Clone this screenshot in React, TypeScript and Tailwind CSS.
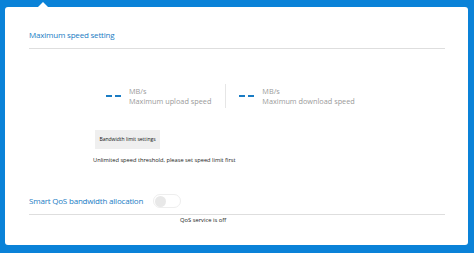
import React from "react";

export default function App() {
  return (
    <div className="w-[474px] h-[253px] bg-[#0a82d8] pt-[7px] pl-[5px] overflow-hidden" style={{ fontFamily: '"Open Sans", "Noto Sans", sans-serif' }}>
      <div className="relative w-[463px] h-[238px] bg-white rounded-[3px] flex flex-col">
        <div className="absolute -top-[5px] left-[33px] w-0 h-0 border-l-[5px] border-r-[5px] border-b-[5px] border-l-transparent border-r-transparent border-b-white" />
        <div className="ml-[24px] mr-[23px] mt-[22px] pb-[7px] border-b border-[#dedede] text-[8px] tracking-[-0.2px] text-[#1a7cc4] leading-[12px]">
          Maximum speed setting
        </div>
        <div className="flex items-center mt-[35px] ml-[101px]">
          <div className="flex items-center">
            <div className="flex gap-[3px] mr-[8px]">
              <div className="w-[6px] h-[2px] bg-[#1a7cc4]" />
              <div className="w-[6px] h-[2px] bg-[#1a7cc4]" />
            </div>
            <div className="text-[7.3px] leading-[10px] text-[#9a9a9a]">
              <div>MB/s</div>
              <div>Maximum upload speed</div>
            </div>
          </div>
          <div className="w-px h-[24px] bg-[#e6e6e6] ml-[14px] mr-[13px]" />
          <div className="flex items-center">
            <div className="flex gap-[3px] mr-[8px]">
              <div className="w-[6px] h-[2px] bg-[#1a7cc4]" />
              <div className="w-[6px] h-[2px] bg-[#1a7cc4]" />
            </div>
            <div className="text-[7.3px] leading-[10px] text-[#9a9a9a]">
              <div>MB/s</div>
              <div>Maximum download speed</div>
            </div>
          </div>
        </div>
        <div className="ml-[90px] mt-[22px] w-[65px] h-[19px] bg-[#efefef] flex items-center justify-center text-[5px] text-[#111] font-medium whitespace-nowrap">
          Bandwidth limit settings
        </div>
        <div className="ml-[88px] mt-[7px] text-[5.7px] text-[#222] leading-[8px] whitespace-nowrap">
          Unlimited speed threshold, please set speed limit first
        </div>
        <div className="ml-[24px] mr-[23px] mt-[29px] pb-[5px] border-b border-[#dedede]">
          <div className="h-[16px] flex items-center">
            <span className="text-[8px] tracking-[-0.2px] text-[#1a7cc4] leading-[12px] w-[124px] whitespace-nowrap">Smart QoS bandwidth allocation</span>
            <div className="w-[28px] h-[14px] rounded-full border border-[#eeeeee] bg-white flex items-center px-[1px]">
              <div className="w-[11px] h-[11px] rounded-full bg-[#e8e8e8]" />
            </div>
          </div>
        </div>
        <div className="ml-[175px] mt-[1px] text-[5.8px] text-[#222] leading-[8px] whitespace-nowrap">QoS service is off</div>
      </div>
    </div>
  );
}
